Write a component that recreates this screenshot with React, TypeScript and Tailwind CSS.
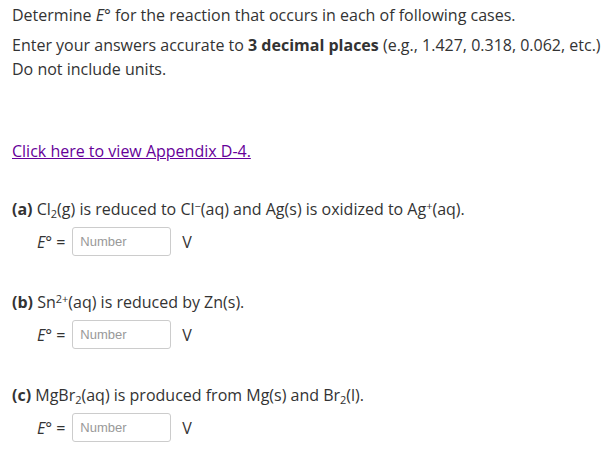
const font = { fontFamily: '"Open Sans", "Noto Sans", sans-serif' };

function Answer() {
  return (
    <div className="flex items-center pl-[25px] mt-[6px]">
      <span className="italic">E</span>
      <span>°</span>
      <span className="ml-[4px]">=</span>
      <input
        type="text"
        placeholder="Number"
        className="ml-[7px] w-[99px] h-[29px] rounded-[3px] border border-[#cccccc] px-[7px] text-[13px] placeholder:text-[#999999] bg-white"
        style={{ fontFamily: '"Liberation Sans", Arial, sans-serif' }}
      />
      <span className="ml-[11px]">V</span>
    </div>
  );
}

export default function App() {
  return (
    <div className="w-[616px] h-[456px] bg-white text-[#333333] px-[12px] pt-[3px] text-[16px] leading-[24px]" style={font}>
      <p className="whitespace-nowrap">
        Determine <span className="italic">E</span>° for the reaction that occurs in each of following cases.
      </p>
      <p className="mt-[6px] whitespace-nowrap">
        Enter your answers accurate to <b>3 decimal places</b> (e.g., 1.427, 0.318, 0.062, etc.)
        <br />
        Do not include units.
      </p>

      <a href="#" className="block w-fit mt-[58px] text-[#660099] underline">
        Click here to view Appendix D-4.
      </a>

      <div className="mt-[34px]">
        <p>
          <b>(a)</b> Cl<sub className="text-[11px]">2</sub>(g) is reduced to Cl<sup className="text-[11px]">−</sup>(aq) and Ag(s) is oxidized to Ag<sup className="text-[11px]">+</sup>(aq).
        </p>
        <Answer />
      </div>

      <div className="mt-[34px]">
        <p>
          <b>(b)</b> Sn<sup className="text-[11px]">2+</sup>(aq) is reduced by Zn(s).
        </p>
        <Answer />
      </div>

      <div className="mt-[34px]">
        <p>
          <b>(c)</b> MgBr<sub className="text-[11px]">2</sub>(aq) is produced from Mg(s) and Br<sub className="text-[11px]">2</sub>(l).
        </p>
        <Answer />
      </div>
    </div>
  );
}
